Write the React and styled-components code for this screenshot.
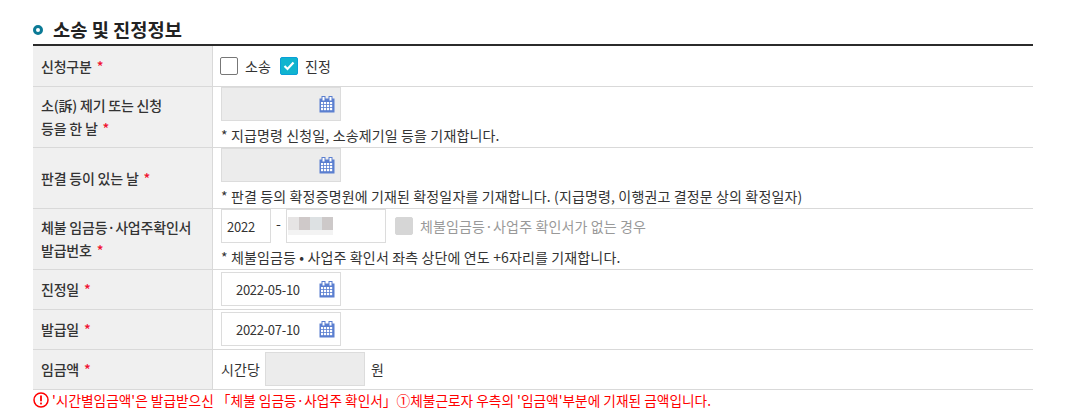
import React from "react";
import styled, { createGlobalStyle } from "styled-components";

const Global = createGlobalStyle`
  html, body { margin: 0; padding: 0; background: #fff; }
  body { font-family: "Noto Sans CJK KR", "Noto Sans", sans-serif; font-size: 14px; letter-spacing: 0.14px; color: #333; overflow: hidden; }
`;
const Page = styled.div`
  width: 1000px;
  margin-left: 33px;
  padding-top: 16px;
`;
const Heading = styled.h2`
  display: flex;
  align-items: center;
  gap: 10px;
  height: 28px;
  margin: 0;
  font-size: 18.7px;
  line-height: 24px;
  font-weight: 700;
  letter-spacing: 0;
  color: #222;
`;
const HeadingText = styled.span`
  margin-bottom: 3px;
`;
const Bullet = styled.span`
  width: 10px;
  height: 10px;
  box-sizing: border-box;
  border: 3px solid #0b7a96;
  border-radius: 50%;
`;
const Table = styled.div`
  border-top: 2px solid #2b2b2b;
`;
const Row = styled.div`
  display: flex;
  height: ${(p) => p.$h}px;
  box-sizing: border-box;
  border-bottom: 1px solid #d9d9d9;
`;
const Th = styled.div`
  width: 180px;
  flex: none;
  box-sizing: border-box;
  display: flex;
  align-items: center;
  padding-left: 8px;
  background: #f0f0f0;
  border-right: 1px solid #d9d9d9;
  font-weight: 500;
  font-size: 14px;
  letter-spacing: -0.2px;
  line-height: 23px;
  color: #333;
  white-space: nowrap;
`;
const Star = styled.span`
  color: #f01030;
  margin-left: 2px;
`;
const Td = styled.div`
  flex: 1;
  padding-left: 8px;
  display: flex;
  flex-direction: column;
`;
const Line = styled.div`
  display: flex;
  align-items: center;
  height: ${(p) => p.$h || 34}px;
  margin-top: ${(p) => p.$mt || 0}px;
  white-space: nowrap;
`;
const Note = styled.div`
  line-height: 18px;
  margin-top: 5px;
  color: #333;
  white-space: nowrap;
`;
const Box = styled.span`
  width: 18px;
  height: 18px;
  box-sizing: border-box;
  border-radius: 2px;
  border: 1px solid ${(p) => (p.$on ? "#0a9fd8" : p.$off ? "#d6d6d6" : "#777")};
  background: ${(p) => (p.$on ? "#10b4cf" : p.$off ? "#d6d6d6" : "#fff")};
  margin-left: ${(p) => p.$ml || 0}px;
  display: flex;
  align-items: center;
  justify-content: center;
`;
const Label = styled.span`
  margin-left: ${(p) => p.$ml || 7}px;
  color: ${(p) => p.$c || "#333"};
`;
const DateField = styled.div`
  width: 120px;
  height: 34px;
  box-sizing: border-box;
  border: 1px solid #dcdcdc;
  background: ${(p) => (p.$off ? "#ececec" : "#fff")};
  display: flex;
  align-items: center;
  justify-content: space-between;
  padding: 0 5px 0 14px;
  font-size: 13px;
  letter-spacing: -0.3px;
  color: #333;
  margin-top: ${(p) => p.$mt || 0}px;
`;
const Plain = styled.div`
  width: ${(p) => p.$w}px;
  height: 34px;
  margin-left: ${(p) => p.$ml || 0}px;
  box-sizing: border-box;
  border: 1px solid #dcdcdc;
  background: ${(p) => (p.$off ? "#ececec" : "#fff")};
  padding-left: 5px;
  display: flex;
  align-items: center;
  font-size: 13px;
  letter-spacing: -0.2px;
`;
const Blur = styled.span`
  width: 45px;
  height: 18px;
  margin-left: -4px;
  background: linear-gradient(to right, #e6e4e4 0 11px, #cfc9c9 11px 22px, #dde1e3 22px 34px, #cdc9c9 34px 45px);
  position: relative;
  &::after { content: ""; position: absolute; left: 0; right: 0; bottom: 0; height: 5px; background: #f3f3f3; }
`;
const Dash = styled.span`
  margin: 0 5px;
  position: relative;
  top: -3px;
`;
const Warning = styled.div`
  display: flex;
  align-items: center;
  gap: 3px;
  height: 20px;
  color: #f00;
  font-size: 13.7px;
  letter-spacing: 0;
  white-space: nowrap;
`;

const Cal = () => (
  <svg width="16" height="17" viewBox="0 0 16 17" aria-hidden="true">
    <rect x="0.5" y="2.5" width="15" height="14" fill="#5b7fd0" />
    <rect x="3" y="0.5" width="3" height="4.5" fill="#fff" stroke="#5b7fd0" />
    <rect x="10" y="0.5" width="3" height="4.5" fill="#fff" stroke="#5b7fd0" />
    {[6, 9, 12].flatMap((y) =>
      [2, 5, 8, 11].map((x) => <rect key={`${x}-${y}`} x={x} y={y} width="2.2" height="2.2" fill="#fff" />)
    )}
  </svg>
);
const Check = () => (
  <svg width="12" height="10" viewBox="0 0 12 10" aria-hidden="true">
    <path d="M1.5 5l3 3 6-6.5" fill="none" stroke="#fff" strokeWidth="2.2" />
  </svg>
);
const Alert = () => (
  <svg width="16" height="16" viewBox="0 0 16 16" aria-hidden="true">
    <circle cx="8" cy="8" r="7" fill="#fff" stroke="#f00" strokeWidth="1.5" />
    <rect x="7.1" y="3.5" width="1.8" height="5.8" fill="#f00" />
    <rect x="7.1" y="10.6" width="1.8" height="1.8" fill="#f00" />
  </svg>
);

export default function App() {
  return (
    <Page>
      <Global />
      <Heading><Bullet /><HeadingText>소송 및 진정정보</HeadingText></Heading>
      <Table>
        <Row $h={41}>
          <Th><span>신청구분 <Star>*</Star></span></Th>
          <Td>
            <Line $h={40}>
              <Box $ml={-1} />
              <Label>소송</Label>
              <Box $on $ml={9}><Check /></Box>
              <Label>진정</Label>
            </Line>
          </Td>
        </Row>
        <Row $h={61}>
          <Th><span>소(訴) 제기 또는 신청<br />등을 한 날 <Star>*</Star></span></Th>
          <Td>
            <DateField $off><span /><Cal /></DateField>
            <Note>* 지급명령 신청일, 소송제기일 등을 기재합니다.</Note>
          </Td>
        </Row>
        <Row $h={61}>
          <Th><span>판결 등이 있는 날 <Star>*</Star></span></Th>
          <Td>
            <DateField $off><span /><Cal /></DateField>
            <Note>* 판결 등의 확정증명원에 기재된 확정일자를 기재합니다. (지급명령, 이행권고 결정문 상의 확정일자)</Note>
          </Td>
        </Row>
        <Row $h={61}>
          <Th><span>체불 임금등·사업주확인서<br />발급번호 <Star>*</Star></span></Th>
          <Td>
            <Line>
              <Plain $w={50}>2022</Plain>
              <Dash>-</Dash>
              <Plain $w={100}><Blur /></Plain>
              <Box $off $ml={9} />
              <Label $c="#999">체불임금등·사업주 확인서가 없는 경우</Label>
            </Line>
            <Note>* 체불임금등 • 사업주 확인서 좌측 상단에 연도 +6자리를 기재합니다.</Note>
          </Td>
        </Row>
        <Row $h={40}>
          <Th><span>진정일 <Star>*</Star></span></Th>
          <Td><DateField $mt={2}><span>2022-05-10</span><Cal /></DateField></Td>
        </Row>
        <Row $h={40}>
          <Th><span>발급일 <Star>*</Star></span></Th>
          <Td><DateField $mt={2}><span>2022-07-10</span><Cal /></DateField></Td>
        </Row>
        <Row $h={40}>
          <Th><span>임금액 <Star>*</Star></span></Th>
          <Td>
            <Line $mt={2}>
              시간당
              <Plain $w={100} $off $ml={5} />
              <Label $ml={6}>원</Label>
            </Line>
          </Td>
        </Row>
      </Table>
      <Warning><Alert />'시간별임금액'은 발급받으신 「체불 임금등·사업주 확인서」①체불근로자 우측의 '임금액'부분에 기재된 금액입니다.</Warning>
    </Page>
  );
}
